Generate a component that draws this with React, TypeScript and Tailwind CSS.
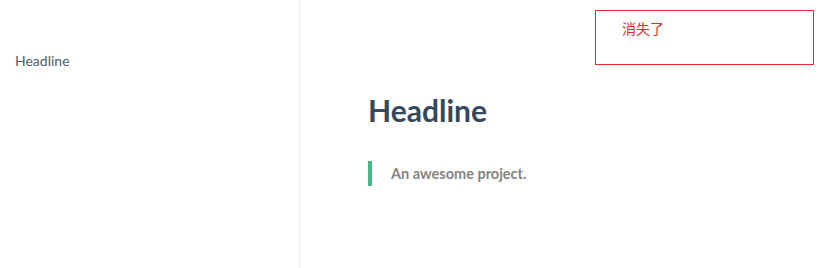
export default function App() {
  return (
    <div className="relative flex h-[268px] w-[818px] overflow-hidden bg-white" style={{ fontFamily: "Lato, 'Noto Sans CJK SC', sans-serif" }}>
      <aside className="w-[300px] shrink-0 border-r border-[#ededed] pl-[15px] pt-[51px]">
        <div className="text-[14px] leading-[20px] text-[#505d6b]">Headline</div>
      </aside>
      <main className="flex-1 pl-[68px] pt-[88px]">
        <h1 className="text-[30px] font-bold leading-[44px] text-[#34495e]">Headline</h1>
        <blockquote className="mt-[29px] border-l-4 border-[#42b983] pl-[19px] text-[14.5px] font-bold leading-[25px] text-[#858585]">
          An awesome project.
        </blockquote>
      </main>
      <div className="absolute left-[595px] top-[10px] h-[55px] w-[219px] border border-[#e4282e] pl-[26px] pt-[7px] text-[14px] leading-[20px] text-[#e4282e]" style={{ fontFamily: "'Noto Sans CJK SC', sans-serif" }}>
        消失了
      </div>
    </div>
  );
}
